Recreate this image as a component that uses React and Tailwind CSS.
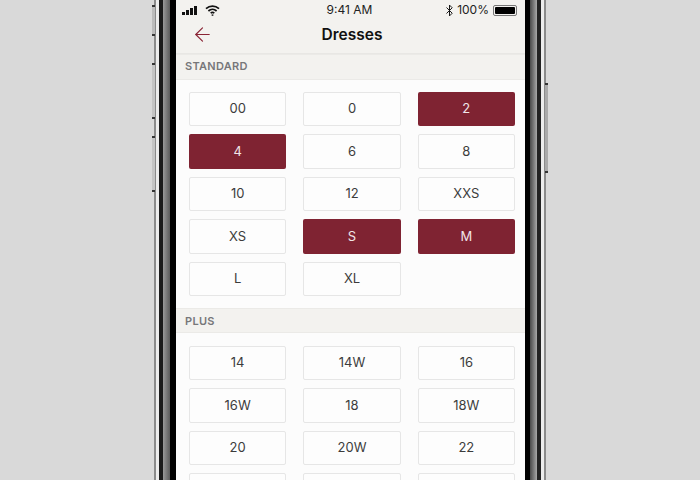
import { ArrowLeft, Bluetooth } from 'lucide-react';

const standard = ['00', '0', '2', '4', '6', '8', '10', '12', 'XXS', 'XS', 'S', 'M', 'L', 'XL'];
// last row runs off the bottom of the window, its labels are not in view
const plus = ['14', '14W', '16', '16W', '18', '18W', '20', '20W', '22', '', '', ''];
const selected = ['2', '4', 'S', 'M'];

const SizeGrid = ({ sizes }) => (
  <div className="grid grid-cols-3 gap-x-[17px] gap-y-[8px] pl-[13px] pr-[10px] pt-[12.5px] pb-[12px]">
    {sizes.map((size, i) => (
      <button
        key={i}
        className={
          selected.includes(size)
            ? 'h-[34.4px] rounded-[2px] bg-[#7f2332] text-[13px] text-[#f1e6e8]'
            : 'h-[34.4px] rounded-[2px] border border-[#e6e6e6] bg-[#fdfdfd] text-[13px] text-[#3c3c3c]'
        }
      >
        {size}
      </button>
    ))}
  </div>
);

const SectionHeader = ({ title, nudge }) => (
  <div className={`flex h-[25.5px] items-center border-y border-[#ebeae7] bg-[#f3f2ef] pl-[9px] text-[11px] font-semibold tracking-[0.3px] text-[#77777a] ${nudge}`}>
    {title}
  </div>
);

const App = () => {
  return (
    <div className="relative flex h-[480px] w-[700px] overflow-hidden bg-[#d9d9d9] font-['Inter',sans-serif]">
      {/* Side buttons */}
      <div className="absolute left-[152px] top-[5px] h-[31px] w-[3px] border-y-2 border-[#333] bg-[#bbb]" />
      <div className="absolute left-[152px] top-[63px] h-[56px] w-[3px] border-y-2 border-[#333] bg-[#c4c4c4]" />
      <div className="absolute left-[152px] top-[136px] h-[56px] w-[3px] border-y-2 border-[#333] bg-[#c4c4c4]" />
      <div className="absolute left-[545px] top-[83px] h-[90px] w-[3px] border-y-2 border-[#333] bg-[#aaa]" />

      {/* Phone body, left edge */}
      <div className="ml-[154px] w-[2px] bg-[#8a8a8a]" />
      <div className="w-[3px] bg-[#ececec]" />
      <div className="w-[4px] bg-[#1c1c1c]" />
      <div className="w-[7px] bg-gradient-to-r from-[#9a9a9a] to-[#5c5c5c]" />
      <div className="w-[6px] bg-black" />

      {/* Screen */}
      <div className="w-[349px] bg-[#fcfcfc]">
        <div className="h-[54px] border-b border-[#e8e7e4] bg-[#f3f2ef]">
          <div className="flex h-[20px] items-center justify-between pl-[6px] pr-[8px] text-[12px] text-[#222]">
            <div className="flex w-[110px] items-center gap-[8px]">
              <div className="flex items-end gap-[1px]">
                <div className="h-[3px] w-[3px] bg-[#111]" />
                <div className="h-[5px] w-[3px] bg-[#111]" />
                <div className="h-[7px] w-[3px] bg-[#111]" />
                <div className="h-[9px] w-[3px] bg-[#111]" />
              </div>
              <svg width="15" height="11" viewBox="0 0 15 11" fill="none" stroke="#111" strokeWidth="1.7">
                <path d="M1 3.6C4.8 0.2 10.2 0.2 14 3.6" />
                <path d="M3.4 6C5.8 3.9 9.2 3.9 11.6 6" />
                <path d="M5.7 8.2C6.8 7.3 8.2 7.3 9.3 8.2" />
                <path d="M7.5 9.4v1.4" />
              </svg>
            </div>
            <span>9:41 AM</span>
            <div className="flex w-[110px] items-center justify-end gap-[1px]">
              <Bluetooth size={13} strokeWidth={1.8} color="#111" />
              <span>100%</span>
              <div className="ml-[3px] h-[11px] w-[24px] rounded-[2px] border border-[#777] p-[1px]">
                <div className="h-full rounded-[1px] bg-black" />
              </div>
            </div>
          </div>
          <div className="relative flex h-[29px] items-center justify-center pl-[3px] text-[15.5px] font-semibold text-[#111]">
            <ArrowLeft size={23} strokeWidth={1.2} color="#8a2435" className="absolute left-[15px] top-[3px]" />
            Dresses
          </div>
        </div>
        <SectionHeader title="STANDARD" nudge="pb-[1px]" />
        <SizeGrid sizes={standard} />
        <SectionHeader title="PLUS" nudge="pt-[1px]" />
        <SizeGrid sizes={plus} />
      </div>

      {/* Phone body, right edge */}
      <div className="w-[5px] bg-black" />
      <div className="w-[7px] bg-gradient-to-r from-[#4a4a4a] to-[#a8a8a8]" />
      <div className="w-[4px] bg-[#222]" />
      <div className="w-[3px] bg-[#ececec]" />
      <div className="w-[2px] bg-[#8a8a8a]" />
    </div>
  );
};

export default App;
